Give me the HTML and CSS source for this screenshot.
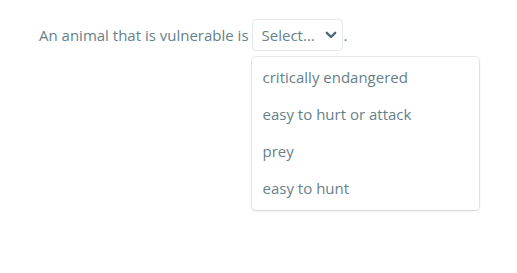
FILE: index.html
```html
<!DOCTYPE html>
<html>
<head>
<meta charset="utf-8">
<link rel="stylesheet" href="styles.css">
</head>
<body>
<div class="sentence">
  <div class="lead">An animal that is vulnerable is</div>
  <div class="select-wrap">
    <div class="select">
      <div class="placeholder">Select...</div>
      <svg class="chev" width="12" height="8" viewBox="0 0 12 8"><path d="M1.8 1.8 L6 6 L10.2 1.8" fill="none" stroke="#4f6b78" stroke-width="2.4" stroke-linecap="round" stroke-linejoin="round"/></svg>
    </div>
    <div class="menu">
      <div class="opt">critically endangered</div>
      <div class="opt">easy to hurt or attack</div>
      <div class="opt">prey</div>
      <div class="opt">easy to hunt</div>
    </div>
  </div>
  <div class="dot">.</div>
</div>
</body>
</html>
```
FILE: styles.css
```css
html, body {
  margin: 0;
  background: #ffffff;
}
body {
  font-family: "Open Sans", "Noto Sans", sans-serif;
  color: #667f8b;
  font-size: 15px;
  min-height: 273px;
}
.sentence {
  display: flex;
  align-items: baseline;
  padding: 19px 0 0 39px;
}
.lead {
  margin-right: 3px;
}
.select-wrap {
  position: relative;
}
.select {
  display: flex;
  align-items: center;
  box-sizing: border-box;
  width: 91px;
  height: 32px;
  border: 1px solid #e4e8ea;
  border-radius: 4px;
  padding: 0 0 0 9px;
}
.placeholder {
  flex: 1;
}
.chev {
  margin-right: 5px;
}
.dot {
  margin-left: 1px;
}
.menu {
  position: absolute;
  z-index: 2;
  left: 0;
  top: 38px;
  width: 227px;
  box-sizing: border-box;
  padding: 2px 0 3px;
  background: #fff;
  border-radius: 4px;
  box-shadow: 0 0 0 1px rgba(0,0,0,0.07), 0 1px 3px rgba(0,0,0,0.12);
}
.opt {
  height: 37px;
  line-height: 37px;
  padding-left: 11px;
  white-space: nowrap;
}
```
